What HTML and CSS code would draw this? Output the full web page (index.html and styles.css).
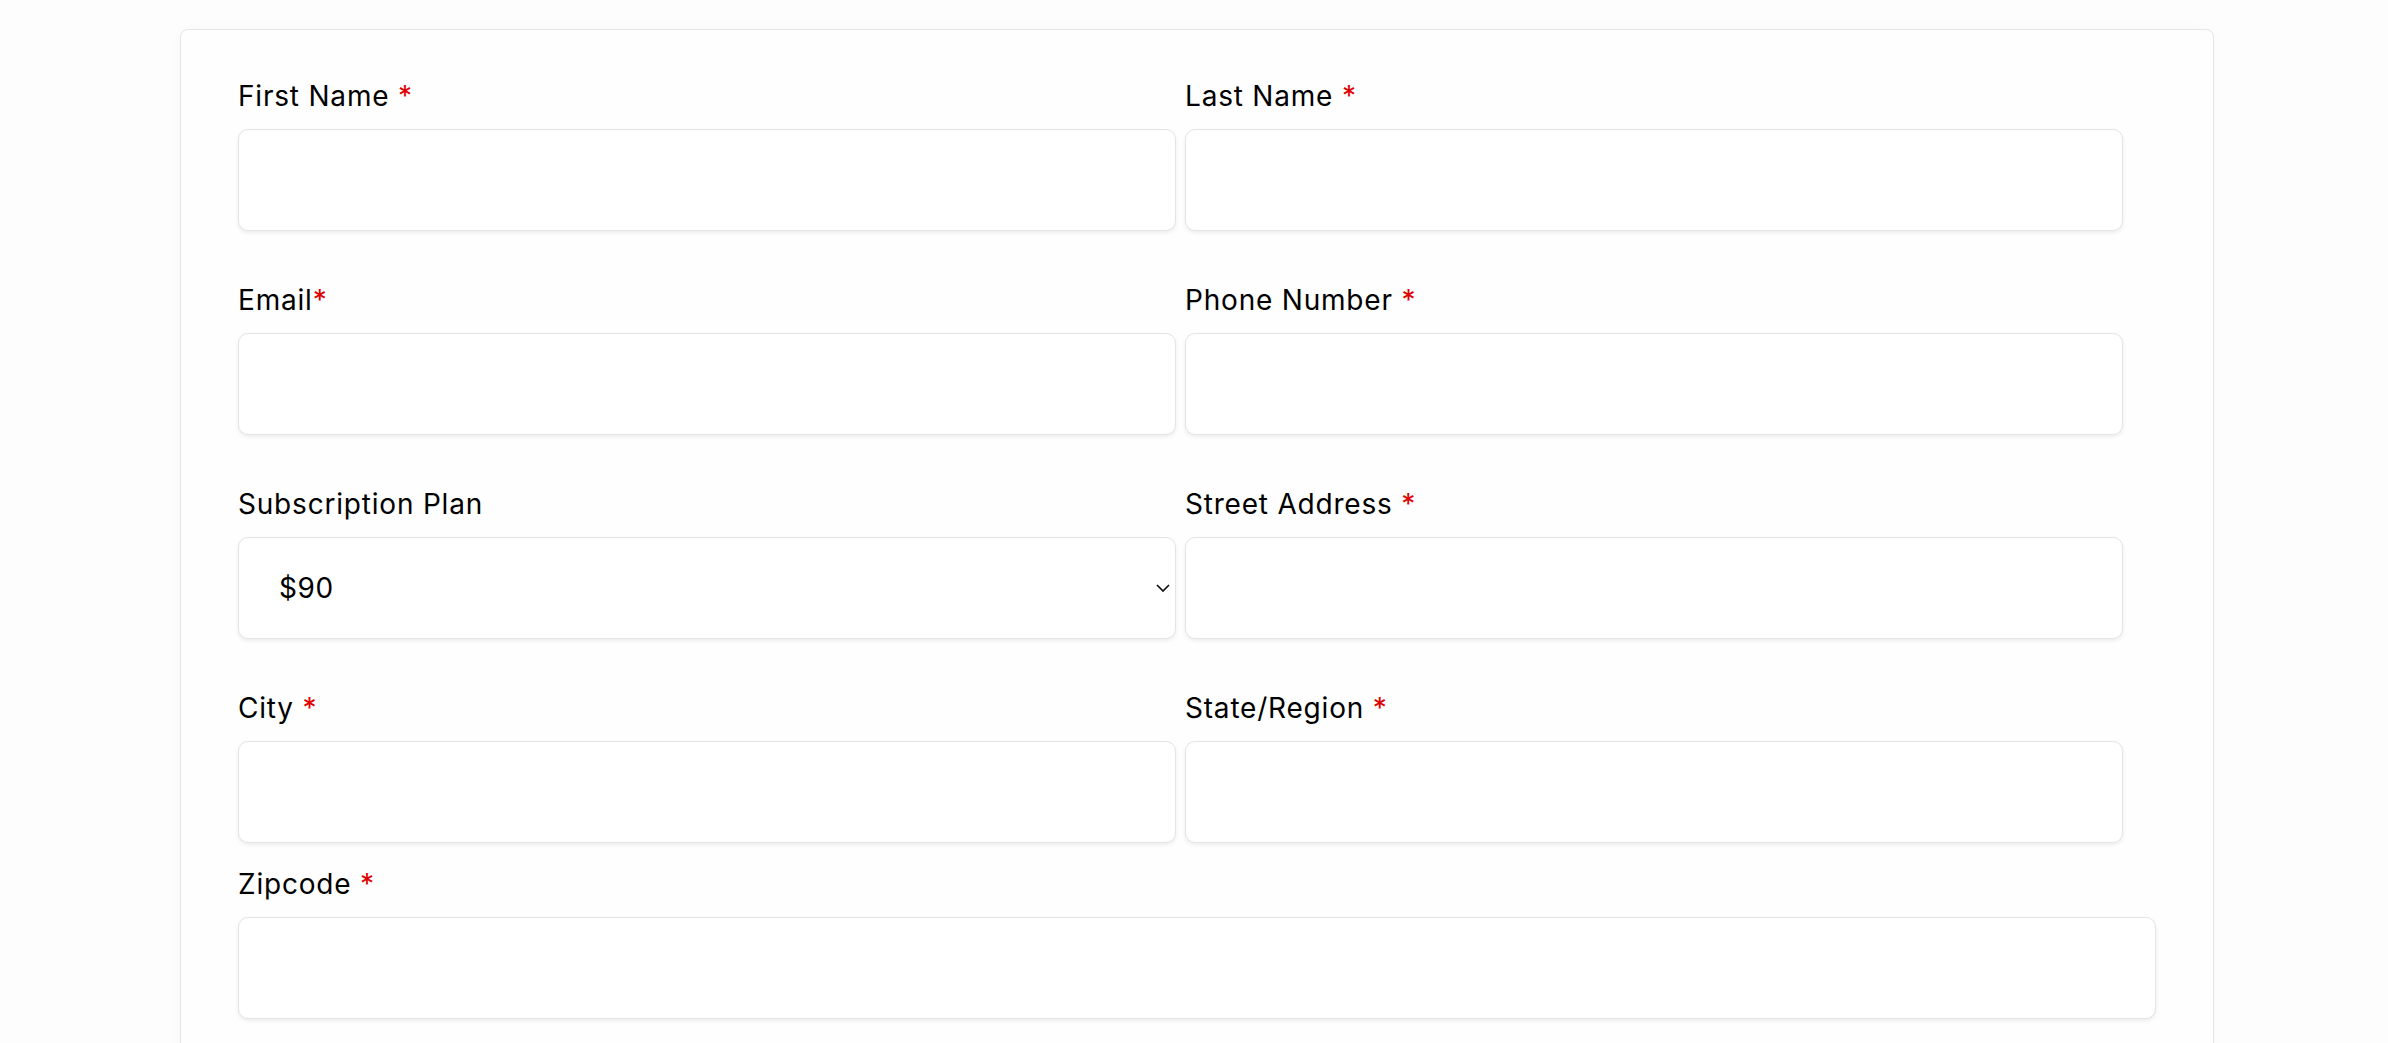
FILE: index.html
```html
<!DOCTYPE html>
<html>
	<head>
		<meta charset="UTF-8">
		<title>Subscription Form</title>
		<link rel="stylesheet" href="styles.css">
	</head>
	<body>
		<div class="card">
			<form class="form">
				<div class="grid">
					<div class="field">
						<label>First Name <span class="req">*</span></label>
						<input type="text" class="ipt">
					</div>
					<div class="field">
						<label>Last Name <span class="req">*</span></label>
						<input type="text" class="ipt">
					</div>
					<div class="field">
						<label>Email<span class="req">*</span></label>
						<input type="email" class="ipt">
					</div>
					<div class="field">
						<label>Phone Number <span class="req">*</span></label>
						<input type="tel" class="ipt">
					</div>
					<div class="field">
						<label>Subscription Plan</label>
						<div class="select-wrap">
							<select class="ipt sel">
								<option>$90</option>
								<option>$180</option>
							</select>
							<svg class="arrow" width="14" height="8" viewBox="0 0 14 8"><path d="M1 1l6 6 6-6" fill="none" stroke="#111" stroke-width="1.7"/></svg>
						</div>
					</div>
					<div class="field">
						<label>Street Address <span class="req">*</span></label>
						<input type="text" class="ipt">
					</div>
					<div class="field">
						<label>City <span class="req">*</span></label>
						<input type="text" class="ipt">
					</div>
					<div class="field">
						<label>State/Region <span class="req">*</span></label>
						<input type="text" class="ipt">
					</div>
				</div>
				<div class="field">
					<label>Zipcode <span class="req">*</span></label>
					<input type="text" class="ipt">
				</div>
			</form>
		</div>
	</body>
</html>
```

FILE: styles.css
```css
*{
	padding: 0;
	margin: 0;
	box-sizing: border-box;
}
body{
	background: #fdfdfd;
	font-family: Inter, "Open Sans", sans-serif;
	color: #000;
}
.card{
	width: 2034px;
	margin: 29px 0 0 180px;
	padding: 49px 57px 120px;
	background: #fefefe;
	border: 1px solid #e6e6e6;
	border-radius: 8px;
	box-shadow: 0 0 14px rgba(0,0,0,0.025);
}
.grid{
	display: grid;
	grid-template-columns: 938px 938px;
	column-gap: 9px;
	row-gap: 52px;
	margin-bottom: 24px;
}
.field label{
	display: block;
	font-size: 28px;
	line-height: 34px;
	letter-spacing: 0.8px;
	margin-bottom: 16px;
}
.req{
	color: #e00000;
}
.ipt{
	display: block;
	width: 100%;
	height: 102px;
	background: #fff;
	border: 1px solid #e4e4e4;
	border-radius: 10px;
	box-shadow: 0 2px 4px rgba(0,0,0,0.07);
	font-family: inherit;
	font-size: 28px;
	color: #000;
	outline: none;
}
.select-wrap{
	position: relative;
}
.sel{
	appearance: none;
	-webkit-appearance: none;
	padding-left: 40px;
	letter-spacing: 0.6px;
}
.arrow{
	position: absolute;
	right: 6px;
	top: 47px;
	pointer-events: none;
}
```
